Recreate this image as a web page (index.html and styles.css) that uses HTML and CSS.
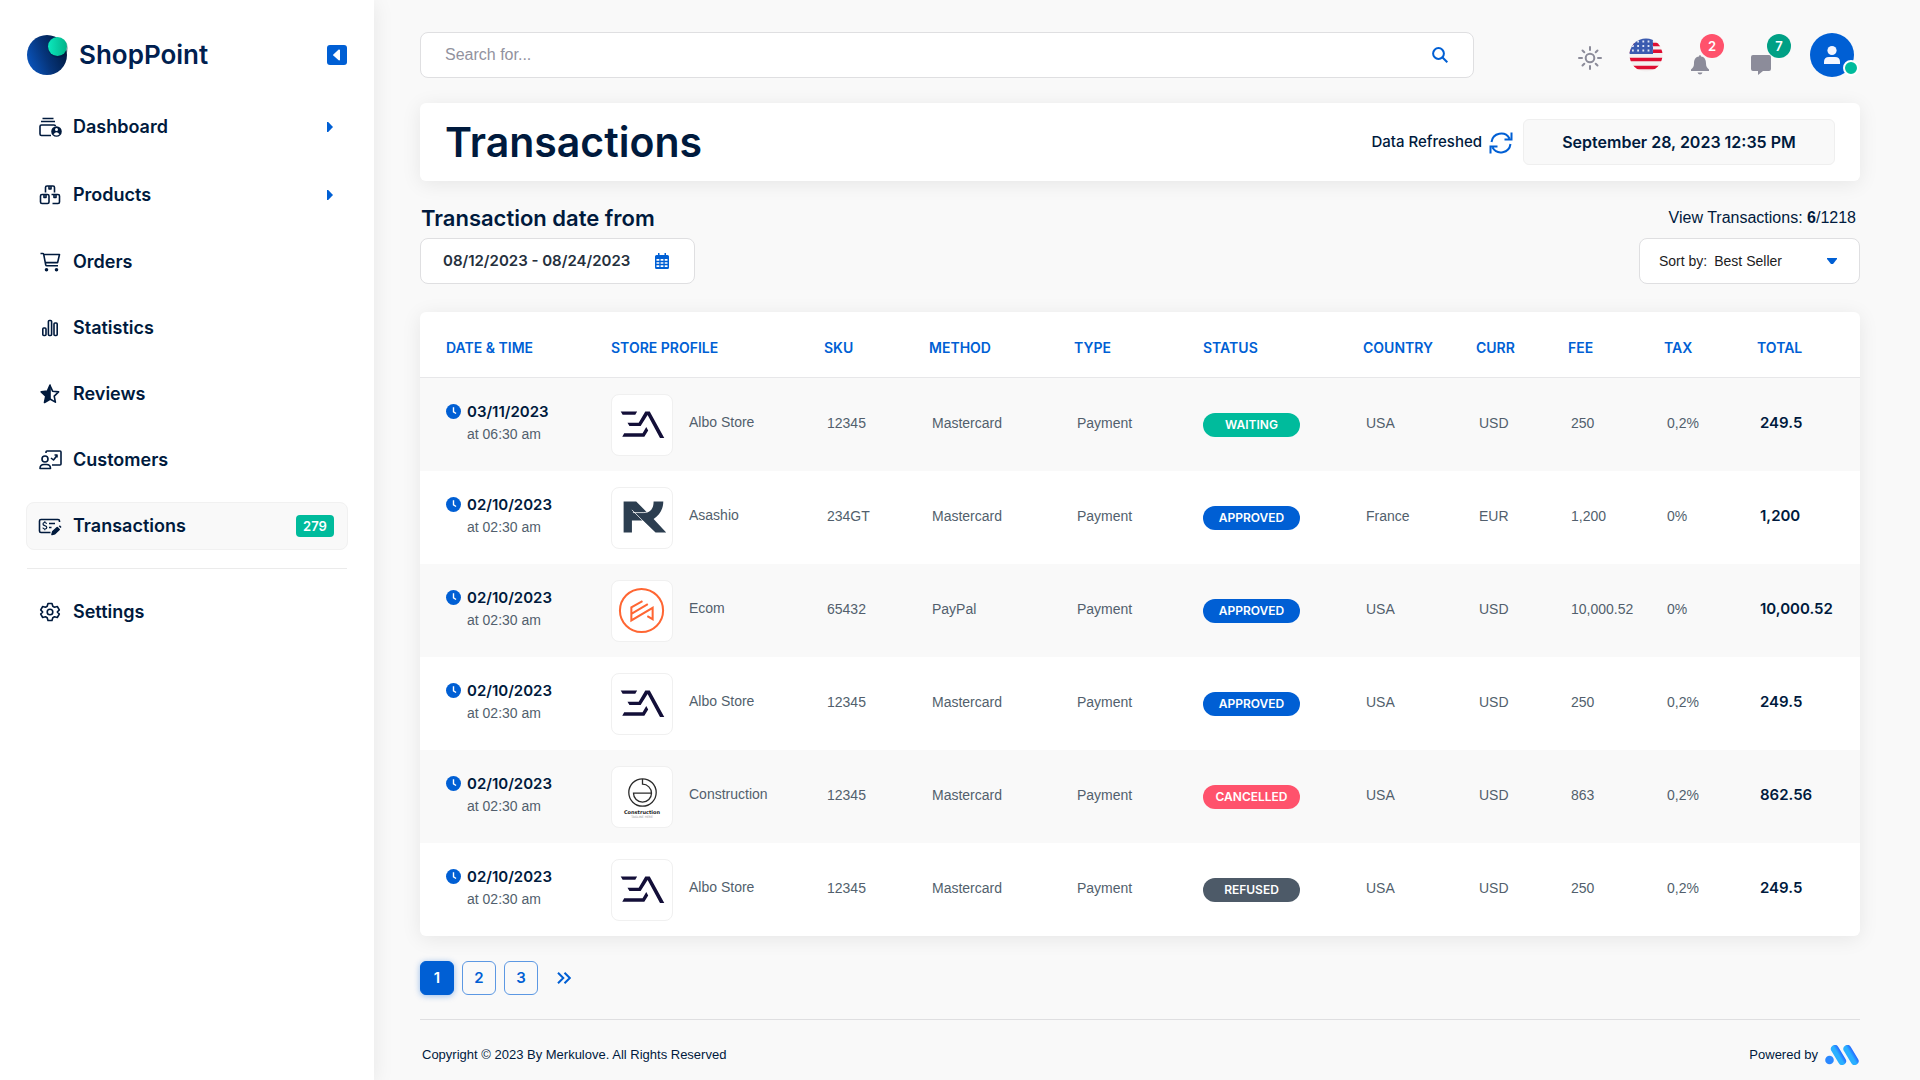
FILE: index.html
```html
<!DOCTYPE html>
<html lang="en">

<head>
    <meta charset="UTF-8" />
    <meta name="viewport" content="width=device-width, initial-scale=1.0" />
    <title>ShopPoint &bull; Transactions</title>
    <link rel="stylesheet" href="styles.css">
</head>

<body>
    <!-- shared icons -->
    <svg class="sprite" aria-hidden="true">
        <symbol id="clock" viewBox="0 0 14 14">
            <circle cx="7" cy="7" r="7" fill="#005fd4" />
            <path d="M7 3v4.3l2.4 1.6" fill="none" stroke="#fff" stroke-width="1.3" />
        </symbol>
        <symbol id="logo-ea" viewBox="0 0 62 62">
            <g fill="#130f38">
                <path d="M9 17h17l-2 3.4H11z" />
                <path d="M16 28.6h11.6L34.4 17h4.6l15 27.4h-4.4L36.8 20.6 29.6 32H18z" />
                <path d="M12.6 39.4h19l3.8-6.4 2 3.6-4 6.6H10.6z" />
            </g>
        </symbol>
        <symbol id="logo-ak" viewBox="0 0 62 62">
            <path fill="#2c3e50" d="M12 14h13l11 11c5-1 7-5 7-11h10c0 8-4 14-10 18l13 14H45L32 33.6H20.6V46H12z" />
            <path d="M20.6 22.6L40 42M21.6 25.4H33q4 0 6-2" fill="none" stroke="#fff" stroke-width=".8" />
        </symbol>
        <symbol id="logo-ecom" viewBox="0 0 62 62">
            <g fill="none" stroke="#ff6633" stroke-width="2.1">
                <circle cx="30.5" cy="30.5" r="22.3" />
                <path d="M31.5 20.8L20 27.2v13.6l22-13v11.6l-5.5-3.2M37 24L20 34" />
            </g>
        </symbol>
    </svg>

    <div class="layout">
        <aside class="sidebar">
            <div class="brand">
                <a href="#" class="brand-link">
                    <svg width="42" height="42" viewBox="0 0 42 42" aria-hidden="true">
                        <defs>
                            <linearGradient id="ball" x1="0" y1=".8" x2="1" y2=".4">
                                <stop offset="0" stop-color="#0a57c2" />
                                <stop offset=".5" stop-color="#063479" />
                                <stop offset="1" stop-color="#001a40" />
                            </linearGradient>
                            <linearGradient id="mint">
                                <stop offset="0" stop-color="#0be8bd" />
                                <stop offset="1" stop-color="#02b389" />
                            </linearGradient>
                        </defs>
                        <circle cx="20" cy="21" r="20" fill="url(#ball)" />
                        <circle cx="31" cy="14" r="10" fill="#001330" opacity=".3" />
                        <circle cx="30.5" cy="12.5" r="9.5" fill="url(#mint)" />
                    </svg>
                    <span>ShopPoint</span>
                </a>
                <button class="collapse" aria-label="Collapse menu">
                    <svg width="20" height="20" viewBox="0 0 20 20">
                        <path d="M13 5v10q-.5.7-1.300.3L6.3 10.500q-.5-.5 0-1L11.700 4.600q.8-.4 1.300.4z" fill="#fff" />
                    </svg>
                </button>
            </div>

            <nav class="menu">
                <a href="#" class="item parent">
                    <svg class="icon" viewBox="0 0 24 24">
                        <path d="M4.500 3.500h11M3 6.500h14M13 20.500H3.500q-1.500 0-1.500-1.500v-7.500Q2 10 3.500 10H16q1.400 0 1.500 1.200" />
                        <circle class="fill" cx="18.5" cy="16.5" r="4.500" />
                        <circle cx="18.5" cy="14.600" r="1.500" class="white" />
                        <path d="M15.500 19.200q3-3.800 6 0-3 2.400-6 0z" class="white" />
                    </svg>
                    Dashboard
                    <svg class="arrow" viewBox="0 0 6 10"><path d="M0 0h1.200L6 5 1.200 10H0z" /></svg>
                </a>
                <a href="#" class="item parent">
                    <svg class="icon" viewBox="0 0 24 24">
                        <path d="M7.500 9.500V4.500Q7.500 3 9 3h6q1.500 0 1.500 1.500v5M11 3v3h2V3M4 11.500h5.500q1.500 0 1.500 1.500v6q0 1.500-1.500 1.500H4q-1.500 0-1.500-1.500v-6q0-1.500 1.500-1.500zM13.500 11.500H20q1.500 0 1.500 1.500v6q0 1.500-1.500 1.500h-5.500M6 11.500v3h2v-3M16 11.500v3h2v-3" />
                    </svg>
                    Products
                    <svg class="arrow" viewBox="0 0 6 10"><path d="M0 0h1.200L6 5 1.200 10H0z" /></svg>
                </a>
                <a href="#" class="item">
                    <svg class="icon" viewBox="0 0 24 24">
                        <path d="M2.500 3.500h2.200q.8 0 1 .8l2 10.500q.2 1 1.200 1H20M5.200 4.500h16.300L19.600 12.600H7.400" />
                        <circle class="fill" cx="8.5" cy="19.7" r="1" />
                        <circle class="fill" cx="18.5" cy="19.7" r="1" />
                    </svg>
                    Orders
                </a>
                <a href="#" class="item">
                    <svg class="icon" viewBox="0 0 24 24">
                        <rect x="4.8" y="12" width="3.200" height="7.500" rx="1" />
                        <rect x="10.4" y="4.5" width="3.200" height="15" rx="1" />
                        <rect x="16" y="7" width="3.200" height="12.500" rx="1" />
                    </svg>
                    Statistics
                </a>
                <a href="#" class="item">
                    <svg class="icon" viewBox="0 0 24 24">
                        <path class="fill" d="M12 3v14.300L6.500 20.500l1.300-6.300L3.200 9.800l6.200-.8z" />
                        <path d="M12 3.500l2.600 5.700 6 .7-4.400 4.200 1.200 6L12 17" />
                    </svg>
                    Reviews
                </a>
                <a href="#" class="item">
                    <svg class="icon" viewBox="0 0 24 24">
                        <path d="M8 5V4q0-1 1-1h13q1 0 1 1v12q0 1-1 1H14M2 20.500q0-4 4-4h2.500q4 0 4 4zM13 10l2.500 2L19 7.500M16.500 7H19v2.500" />
                        <circle cx="7" cy="11" r="3" />
                    </svg>
                    Customers
                </a>
                <a href="#" class="item active">
                    <svg class="icon" viewBox="0 0 24 24">
                        <path d="M12.500 18.500H3q-1.500 0-1.500-1.500V7Q1.500 5.500 3 5.500h17q1.500 0 1.500 1.500v1M11 9.500h6M11 13.500h2.500" />
                        <path class="thin" d="M8.600 9.700q-.4-1.200-1.900-1.200-1.700 0-1.700 1.500 0 1.200 1.800 1.600 2 .5 2 1.900 0 1.500-2 1.500-1.700 0-2-1.300M6.800 7.200v1.300M6.800 15v1.300" />
                        <path class="fill" d="M14 20.500l.8-3 4.400-4 2 2-4.400 4.200zM21.300 11.800l1.700 1.700" />
                    </svg>
                    Transactions
                    <span class="count">279</span>
                </a>
                <hr class="divider">
                <a href="#" class="item parent">
                    <svg class="icon" viewBox="0 0 24 24">
                        <path d="M10 3.500h4l.8 2.700 1.700 1 2.800-.7 2 3.400-2 2.100 2 2.100-2 3.400-2.800-.7-1.700 1-.8 2.700h-4l-.8-2.700-1.700-1-2.800.7-2-3.400 2-2.100-2-2.100 2-3.400 2.800.7 1.700-1z" />
                        <circle cx="12" cy="12" r="2.800" />
                    </svg>
                    Settings
                </a>
            </nav>
        </aside>

        <main class="main">
            <header class="topbar">
                <form class="search">
                    <input type="text" placeholder="Search for..." aria-label="Search">
                    <button type="button" aria-label="Search">
                        <svg width="16" height="16" viewBox="0 0 16 16" fill="none" stroke="#005fd4" stroke-width="2">
                            <circle cx="6.5" cy="6.5" r="5.4" />
                            <path d="M10.300 10.300l5 5" />
                        </svg>
                    </button>
                </form>
                <div class="tools">
                    <button class="tool sun" aria-label="Theme">
                        <svg width="24" height="24" viewBox="0 0 24 24" fill="none" stroke="#8c8c9a" stroke-width="2" stroke-linecap="round">
                            <circle cx="12" cy="12" r="4.300" />
                            <path d="M12 1v3M12 20v3M1 12h3M20 12h3M4.500 4.500l1.800 1.800M17.700 17.700l1.800 1.800M4.500 19.500l1.800-1.800M17.700 6.300l1.800-1.800" />
                        </svg>
                    </button>
                    <button class="tool flag" aria-label="Language">
                        <svg width="34" height="34" viewBox="0 0 34 34">
                            <clipPath id="round"><circle cx="17" cy="17" r="16.500" /></clipPath>
                            <g clip-path="url(#round)">
                                <rect width="34" height="34" fill="#f3f0f0" />
                                <path d="M0 6.500h34M0 13.200h34M0 21.500h34M0 29.500h34" stroke="#df0d32" stroke-width="3.600" />
                                <rect width="24" height="16" fill="#3b5bb0" />
                                <path d="M3 3.500h21M3 8h21M3 12.500h21" stroke="#dfe5f5" stroke-width="1.800" stroke-dasharray="1.800 3.400" />
                            </g>
                        </svg>
                    </button>
                    <button class="tool bell" aria-label="Notifications">
                        <svg width="20" height="20" viewBox="0 0 20 20" fill="#8c8c9a">
                            <path d="M9 1.500q0-1.500 1-1.500t1 1.500c4 .6 5 3.500 5 7 0 3 1 4.500 3 6v1.500H1v-1.500c2-1.500 3-3 3-6 0-3.500 1-6.400 5-7zM7.500 17.500h5q-.5 2-2.500 2t-2.500-2z" />
                        </svg>
                        <span class="badge red">2</span>
                    </button>
                    <button class="tool chat" aria-label="Messages">
                        <svg width="20" height="20" viewBox="0 0 20 20" fill="#8c8c9a">
                            <path d="M2 0h16q2 0 2 2v12q0 2-2 2h-6l-5 4v-4H2q-2 0-2-2V2q0-2 2-2z" />
                        </svg>
                        <span class="badge green">7</span>
                    </button>
                    <button class="tool avatar" aria-label="Account">
                        <svg width="44" height="44" viewBox="0 0 44 44">
                            <circle cx="22" cy="22" r="22" fill="#005fd4" />
                            <circle cx="22" cy="17.500" r="4.600" fill="#f4f6ff" />
                            <path d="M14 31v-2q0-5 5-5h6q5 0 5 5v2z" fill="#f4f6ff" />
                        </svg>
                        <span class="online"></span>
                    </button>
                </div>
            </header>

            <section class="title-card">
                <h1>Transactions</h1>
                <div class="refresh">
                    <span>Data Refreshed</span>
                    <button aria-label="Refresh">
                        <svg width="24" height="24" viewBox="0 0 24 24" fill="none" stroke="#005fd4" stroke-width="2">
                            <path d="M2.500 11a9.700 9.700 0 0 1 18-3.500M22.500 1.500v7h-7M21.500 13a9.700 9.700 0 0 1-18 3.500M1.500 22.500v-7h7" />
                        </svg>
                    </button>
                    <time class="stamp">September 28, 2023 12:35 PM</time>
                </div>
            </section>

            <section class="filters">
                <div class="filter">
                    <label class="filter-title" for="range">Transaction date from</label>
                    <div class="field range">
                        <input type="text" id="range" value="08/12/2023 - 08/24/2023">
                        <svg width="14" height="16" viewBox="0 0 14 16">
                            <path d="M1.500 2H3V0h1.500v2h5V0H11v2h1.500q1.500 0 1.500 1.500v11q0 1.500-1.500 1.500h-11Q0 16 0 14.500v-11Q0 2 1.500 2z" fill="#005fd4" />
                            <path d="M1.500 6.800h11M1.500 10h11M1.500 13.200h11" stroke="#fff" stroke-width="1.700" stroke-dasharray="2.800 1.300" />
                        </svg>
                    </div>
                </div>
                <div class="filter right">
                    <p class="viewed">View Transactions: <b>6</b>/1218</p>
                    <div class="field sort">
                        <label for="sort">Sort by:</label>
                        <select id="sort">
                            <option>Best Seller</option>
                        </select>
                        <svg width="10" height="6" viewBox="0 0 10 6"><path d="M0 0h10v1L6 6H4L0 1z" fill="#005fd4" /></svg>
                    </div>
                </div>
            </section>

            <table class="table">
                <colgroup>
                    <col class="c-date"><col class="c-store"><col class="c-sku"><col class="c-method"><col class="c-type"><col class="c-status"><col class="c-country"><col class="c-curr"><col class="c-fee"><col class="c-tax"><col class="c-total">
                </colgroup>
                <thead>
                    <tr>
                        <th>DATE &amp; TIME</th>
                        <th>STORE PROFILE</th>
                        <th>SKU</th>
                        <th>METHOD</th>
                        <th>TYPE</th>
                        <th>STATUS</th>
                        <th>COUNTRY</th>
                        <th>CURR</th>
                        <th>FEE</th>
                        <th>TAX</th>
                        <th>TOTAL</th>
                    </tr>
                </thead>
                <tbody>
                    <tr>
                        <td><div class="when"><svg><use href="#clock" /></svg><b>03/11/2023</b><span>at 06:30 am</span></div></td>
                        <td><div class="store"><svg><use href="#logo-ea" /></svg><span>Albo Store</span></div></td>
                        <td>12345</td>
                        <td>Mastercard</td>
                        <td>Payment</td>
                        <td><span class="status waiting">WAITING</span></td>
                        <td>USA</td>
                        <td>USD</td>
                        <td>250</td>
                        <td>0,2%</td>
                        <td>249.5</td>
                    </tr>
                    <tr>
                        <td><div class="when"><svg><use href="#clock" /></svg><b>02/10/2023</b><span>at 02:30 am</span></div></td>
                        <td><div class="store"><svg><use href="#logo-ak" /></svg><span>Asashio</span></div></td>
                        <td>234GT</td>
                        <td>Mastercard</td>
                        <td>Payment</td>
                        <td><span class="status approved">APPROVED</span></td>
                        <td>France</td>
                        <td>EUR</td>
                        <td>1,200</td>
                        <td>0%</td>
                        <td>1,200</td>
                    </tr>
                    <tr>
                        <td><div class="when"><svg><use href="#clock" /></svg><b>02/10/2023</b><span>at 02:30 am</span></div></td>
                        <td><div class="store"><svg><use href="#logo-ecom" /></svg><span>Ecom</span></div></td>
                        <td>65432</td>
                        <td>PayPal</td>
                        <td>Payment</td>
                        <td><span class="status approved">APPROVED</span></td>
                        <td>USA</td>
                        <td>USD</td>
                        <td>10,000.52</td>
                        <td>0%</td>
                        <td>10,000.52</td>
                    </tr>
                    <tr>
                        <td><div class="when"><svg><use href="#clock" /></svg><b>02/10/2023</b><span>at 02:30 am</span></div></td>
                        <td><div class="store"><svg><use href="#logo-ea" /></svg><span>Albo Store</span></div></td>
                        <td>12345</td>
                        <td>Mastercard</td>
                        <td>Payment</td>
                        <td><span class="status approved">APPROVED</span></td>
                        <td>USA</td>
                        <td>USD</td>
                        <td>250</td>
                        <td>0,2%</td>
                        <td>249.5</td>
                    </tr>
                    <tr>
                        <td><div class="when"><svg><use href="#clock" /></svg><b>02/10/2023</b><span>at 02:30 am</span></div></td>
                        <td>
                            <div class="store">
                                <svg viewBox="0 0 60 60">
                                    <g fill="none" stroke="#2b2b2b" stroke-width="1.300">
                                        <circle cx="30.5" cy="25.5" r="13.700" />
                                        <path d="M30.500 12v5.200a9 9 0 1 1-9 9h18.400" />
                                    </g>
                                    <text class="tiny-name" x="30" y="47" text-anchor="middle">Construction</text>
                                    <text class="tiny-tag" x="30" y="51" text-anchor="middle">TAGLINE HERE</text>
                                </svg>
                                <span>Construction</span>
                            </div>
                        </td>
                        <td>12345</td>
                        <td>Mastercard</td>
                        <td>Payment</td>
                        <td><span class="status cancelled">CANCELLED</span></td>
                        <td>USA</td>
                        <td>USD</td>
                        <td>863</td>
                        <td>0,2%</td>
                        <td>862.56</td>
                    </tr>
                    <tr>
                        <td><div class="when"><svg><use href="#clock" /></svg><b>02/10/2023</b><span>at 02:30 am</span></div></td>
                        <td><div class="store"><svg><use href="#logo-ea" /></svg><span>Albo Store</span></div></td>
                        <td>12345</td>
                        <td>Mastercard</td>
                        <td>Payment</td>
                        <td><span class="status refused">REFUSED</span></td>
                        <td>USA</td>
                        <td>USD</td>
                        <td>250</td>
                        <td>0,2%</td>
                        <td>249.5</td>
                    </tr>
                </tbody>
            </table>

            <nav class="pages" aria-label="Pages">
                <a href="#" class="page current">1</a>
                <a href="#" class="page">2</a>
                <a href="#" class="page">3</a>
                <a href="#" class="next" aria-label="Next">
                    <svg width="14" height="12" viewBox="0 0 14 12" fill="none" stroke="#005fd4" stroke-width="2">
                        <path d="M1 .7L6.300 6 1 11.300M7.500.7L12.800 6l-5.300 5.300" />
                    </svg>
                </a>
            </nav>

            <footer class="footer">
                <span>Copyright © 2023 By Merkulove. All Rights Reserved</span>
                <a href="#" class="powered">Powered by
                    <svg width="34" height="20" viewBox="0 0 34 20">
                        <defs>
                            <linearGradient id="wave" x1="0" y1="0" x2="1" y2="0">
                                <stop offset=".5" stop-color="#2bb0ff" />
                                <stop offset="1" stop-color="#2468ff" />
                            </linearGradient>
                        </defs>
                        <circle cx="4.5" cy="15" r="4.300" fill="#2b88ff" />
                        <rect x="9.5" y="-1" width="8" height="22" rx="4" transform="rotate(-31 13.500 10)" fill="url(#wave)" />
                        <rect x="22" y="-1" width="8" height="22" rx="4" transform="rotate(-31 26 10)" fill="url(#wave)" />
                    </svg>
                </a>
            </footer>
        </main>
    </div>
</body>

</html>
```
FILE: styles.css
```css
:root {
    --blue: #005fd4;
    --navy: #001a3d;
    --gray: #525f6d;
    --green: #00bb9c;
    --red: #ff526c;
    --page: #f9f9f9;
    --border: #dfdfe1;
    --shadow: 0 3px 20px rgba(0, 0, 0, 0.08);
    --text-font: "Liberation Sans", Arial, sans-serif;
    --wide-font: Inter, "Liberation Sans", sans-serif;
}

* {
    box-sizing: border-box;
}

body {
    margin: 0;
    background: var(--page);
    color: var(--navy);
    font: 14px/20px var(--text-font);
}

a {
    color: inherit;
    text-decoration: none;
}

button {
    padding: 0;
    border: none;
    background: none;
    cursor: pointer;
}

button svg,
a svg {
    display: block;
}

.sprite {
    position: absolute;
    width: 0;
    height: 0;
}

.layout {
    display: flex;
    min-height: 100vh;
}

/* sidebar */
.sidebar {
    width: 374px;
    flex-shrink: 0;
    padding: 34px 26px;
    background: #fff;
    box-shadow: var(--shadow);
}

.brand {
    display: flex;
    justify-content: space-between;
    align-items: center;
    height: 42px;
    padding: 0 1px;
}

.brand-link {
    display: flex;
    align-items: center;
    gap: 10px;
    color: #00204f;
    font: 600 26px/32px var(--wide-font);
}

.collapse {
    background: var(--blue);
    border-radius: 3px;
}

.menu {
    display: flex;
    flex-direction: column;
    gap: 18px;
    margin-top: 26px;
}

.item {
    display: flex;
    align-items: center;
    height: 48px;
    padding: 0 13px 0 11px;
    border: 1px solid transparent;
    border-radius: 8px;
    font: 600 18px/24px var(--wide-font);
}

.item.parent {
    height: 50px;
}

.item.active {
    background: var(--page);
    border-color: #f1f1f1;
}

.icon {
    width: 24px;
    height: 24px;
    margin-right: 11px;
    fill: none;
    stroke: var(--navy);
    stroke-width: 1.6;
    stroke-linejoin: round;
}

.icon .fill {
    fill: var(--navy);
}

.icon .thin {
    stroke-width: 1.2;
}

.icon .white {
    fill: #fff;
    stroke: none;
}

.arrow {
    width: 6px;
    height: 10px;
    margin: 0 1px 0 auto;
    fill: var(--blue);
}

.count {
    width: 38px;
    margin-left: auto;
    border-radius: 4px;
    background: var(--green);
    color: #fff;
    font: 600 13px/22px var(--wide-font);
    text-align: center;
}

.divider {
    width: 320px;
    margin: 0 auto;
    border: none;
    border-top: 1px solid #ebebeb;
}

/* top bar */
.main {
    flex: 1;
    min-width: 0;
    padding: 32px 60px 0 46px;
}

.topbar {
    display: flex;
    justify-content: space-between;
    align-items: center;
}

.search {
    display: flex;
    align-items: center;
    flex: 0 1 1054px;
    height: 46px;
    padding: 0 25px 0 24px;
    background: #fff;
    border: 1px solid var(--border);
    border-radius: 8px;
}

.search input {
    flex: 1;
    border: none;
    outline: none;
    padding: 0;
    font: 16px/20px var(--text-font);
}

.search input::placeholder {
    color: #92929e;
}

.tools {
    display: flex;
    align-items: center;
    padding-right: 6px;
}

.tool {
    position: relative;
}

.sun {
    margin: 6px 27px 0 0;
}

.flag {
    margin-right: 27px;
}

.bell {
    margin: 20px 41px 0 0;
}

.chat {
    margin: 20px 39px 0 0;
}

.badge {
    position: absolute;
    left: 10px;
    bottom: 17px;
    width: 24px;
    border-radius: 50%;
    color: #fff;
    font: 600 13px/24px var(--wide-font);
}

.chat .badge {
    left: 16px;
}

.badge.red {
    background: var(--red);
}

.badge.green {
    background: #00a085;
}

.online {
    position: absolute;
    right: -5px;
    bottom: 1px;
    width: 16px;
    height: 16px;
    border: 2px solid #fff;
    border-radius: 50%;
    background: var(--green);
}

/* title */
.title-card {
    display: flex;
    justify-content: space-between;
    align-items: center;
    height: 78px;
    margin-top: 25px;
    padding: 0 25px;
    background: #fff;
    border-radius: 6px;
    box-shadow: var(--shadow);
}

h1 {
    margin: 0;
    font: 600 41px/48px var(--wide-font);
}

.refresh {
    display: flex;
    align-items: center;
    font: 500 15px/20px var(--wide-font);
}

.refresh button {
    margin: 2px 10px 0 7px;
}

.stamp {
    width: 312px;
    background: var(--page);
    border: 1px solid #efefef;
    border-radius: 6px;
    font-size: 16px;
    font-weight: 600;
    line-height: 44px;
    text-align: center;
}

/* filters */
.filters {
    display: flex;
    justify-content: space-between;
    margin-top: 25px;
}

.filter-title {
    display: block;
    padding-left: 1px;
    font: 600 22px/24px var(--wide-font);
}

.viewed {
    margin: 0;
    padding-right: 4px;
    font-size: 16px;
    line-height: 24px;
    text-align: right;
}

.field {
    display: flex;
    align-items: center;
    height: 46px;
    margin-top: 8px;
    background: #fff;
    border: 1px solid var(--border);
    border-radius: 8px;
}

.field input,
.field select {
    flex: 1;
    min-width: 0;
    padding: 0;
    border: none;
    outline: none;
    background: none;
    appearance: none;
}

.range {
    width: 275px;
    padding: 0 25px 0 22px;
}

.range input {
    color: #25303d;
    font: 600 15px/20px var(--wide-font);
}

.sort {
    width: 221px;
    padding: 0 22px 0 19px;
    color: #1c1c1e;
}

.sort select {
    margin-left: 7px;
    color: inherit;
    font: 14px/20px var(--text-font);
}

/* table */
.table {
    width: 100%;
    margin-top: 28px;
    table-layout: fixed;
    border-spacing: 0;
    background: #fff;
    border-radius: 6px;
    box-shadow: var(--shadow);
    color: var(--gray);
}

.c-date { width: 191px; }
.c-store { width: 213px; }
.c-sku { width: 105px; }
.c-method { width: 145px; }
.c-type { width: 129px; }
.c-status { width: 160px; }
.c-country { width: 113px; }
.c-curr { width: 92px; }
.c-fee { width: 96px; }
.c-tax { width: 93px; }
.c-total { width: 103px; }

th {
    height: 66px;
    padding: 6px 0 0;
    border-bottom: 1px solid #e7e7e9;
    color: var(--blue);
    font: 600 14px/20px var(--wide-font);
    text-align: left;
}

td {
    height: 93px;
    padding: 0 0 4px 3px;
}

th:first-child,
td:first-child {
    padding-left: 26px;
}

td:nth-child(2),
td:nth-child(6) {
    padding: 0;
}

tbody tr:nth-child(odd) {
    background: var(--page);
}

td:last-child {
    color: var(--navy);
    font: 600 15px/20px var(--wide-font);
}

.when {
    display: grid;
    grid-template-columns: 21px auto;
    align-items: center;
    row-gap: 2px;
}

.when svg {
    width: 15px;
    height: 15px;
}

.when b {
    color: var(--navy);
    font: 600 15px/20px var(--wide-font);
}

.when span {
    grid-column: 2;
}

.store {
    display: flex;
    align-items: center;
    gap: 16px;
}

.store svg {
    width: 62px;
    height: 62px;
    background: #fff;
    border: 1px solid #f0f0f0;
    border-radius: 8px;
}

.store span {
    padding-bottom: 6px;
}

.tiny-name {
    fill: #222;
    font: bold 5px "DejaVu Sans", sans-serif;
}

.tiny-tag {
    fill: #999;
    font: 3px "DejaVu Sans", sans-serif;
}

.status {
    display: block;
    width: 97px;
    border-radius: 12px;
    color: #fff;
    font: 600 12px/24px var(--wide-font);
    text-align: center;
}

.status.waiting {
    background: var(--green);
}

.status.approved {
    background: var(--blue);
}

.status.cancelled {
    background: var(--red);
}

.status.refused {
    background: #4d5a68;
}

/* pagination */
.pages {
    display: flex;
    align-items: center;
    gap: 8px;
    margin-top: 25px;
    color: var(--blue);
    font: 600 15px/32px var(--wide-font);
    text-align: center;
}

.page {
    width: 34px;
    border: 1px solid #5c98e3;
    border-radius: 6px;
}

.page.current {
    background: var(--blue);
    border-color: var(--blue);
    color: #fff;
    box-shadow: 0 1px 6px rgba(0, 95, 212, 0.4);
}

.next {
    margin-left: 11px;
}

/* footer */
.footer {
    display: flex;
    justify-content: space-between;
    align-items: center;
    margin-top: 24px;
    padding: 25px 1px 14px 2px;
    border-top: 1px solid var(--border);
    font-size: 13px;
}

.powered {
    display: flex;
    align-items: center;
    gap: 7px;
}
```
